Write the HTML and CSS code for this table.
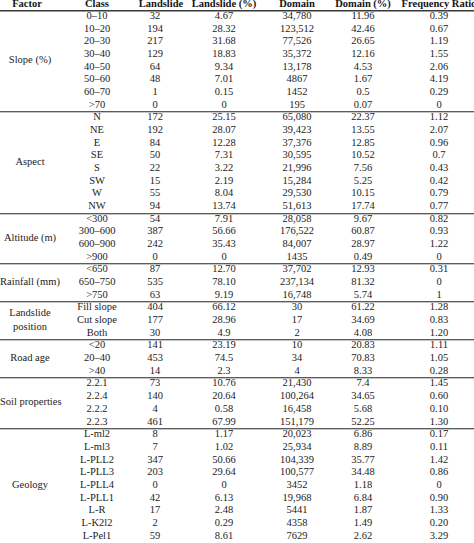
FILE: index.html
```html
<!DOCTYPE html>
<html>
<head>
<meta charset="utf-8">
<link rel="stylesheet" href="styles.css">
</head>
<body>
<table class="fr">
<colgroup>
<col class="c-factor"><col class="c-class"><col class="c-ls"><col class="c-lsp"><col class="c-dom"><col class="c-domp"><col class="c-fr">
</colgroup>
<thead>
<tr><th class="h-factor">Factor</th><th class="h-class">Class</th><th class="h-ls">Landslide</th><th>Landslide (%)</th><th>Domain</th><th>Domain (%)</th><th>Frequency Ratio</th></tr>
</thead>
<tbody class="grp first">
<tr><td class="factor" rowspan="8">Slope (%)</td><td class="cls">0–10</td><td class="ls">32</td><td>4.67</td><td>34,780</td><td>11.96</td><td>0.39</td></tr>
<tr><td class="cls">10–20</td><td class="ls">194</td><td>28.32</td><td>123,512</td><td>42.46</td><td>0.67</td></tr>
<tr><td class="cls">20–30</td><td class="ls">217</td><td>31.68</td><td>77,526</td><td>26.65</td><td>1.19</td></tr>
<tr><td class="cls">30–40</td><td class="ls">129</td><td>18.83</td><td>35,372</td><td>12.16</td><td>1.55</td></tr>
<tr><td class="cls">40–50</td><td class="ls">64</td><td>9.34</td><td>13,178</td><td>4.53</td><td>2.06</td></tr>
<tr><td class="cls">50–60</td><td class="ls">48</td><td>7.01</td><td>4867</td><td>1.67</td><td>4.19</td></tr>
<tr><td class="cls">60–70</td><td class="ls">1</td><td>0.15</td><td>1452</td><td>0.5</td><td>0.29</td></tr>
<tr><td class="cls">&gt;70</td><td class="ls">0</td><td>0</td><td>195</td><td>0.07</td><td>0</td></tr>
</tbody>
<tbody class="grp">
<tr><td class="factor" rowspan="8">Aspect</td><td class="cls">N</td><td class="ls">172</td><td>25.15</td><td>65,080</td><td>22.37</td><td>1.12</td></tr>
<tr><td class="cls">NE</td><td class="ls">192</td><td>28.07</td><td>39,423</td><td>13.55</td><td>2.07</td></tr>
<tr><td class="cls">E</td><td class="ls">84</td><td>12.28</td><td>37,376</td><td>12.85</td><td>0.96</td></tr>
<tr><td class="cls">SE</td><td class="ls">50</td><td>7.31</td><td>30,595</td><td>10.52</td><td>0.7</td></tr>
<tr><td class="cls">S</td><td class="ls">22</td><td>3.22</td><td>21,996</td><td>7.56</td><td>0.43</td></tr>
<tr><td class="cls">SW</td><td class="ls">15</td><td>2.19</td><td>15,284</td><td>5.25</td><td>0.42</td></tr>
<tr><td class="cls">W</td><td class="ls">55</td><td>8.04</td><td>29,530</td><td>10.15</td><td>0.79</td></tr>
<tr><td class="cls">NW</td><td class="ls">94</td><td>13.74</td><td>51,613</td><td>17.74</td><td>0.77</td></tr>
</tbody>
<tbody class="grp">
<tr><td class="factor" rowspan="4">Altitude (m)</td><td class="cls">&lt;300</td><td class="ls">54</td><td>7.91</td><td>28,058</td><td>9.67</td><td>0.82</td></tr>
<tr><td class="cls">300–600</td><td class="ls">387</td><td>56.66</td><td>176,522</td><td>60.87</td><td>0.93</td></tr>
<tr><td class="cls">600–900</td><td class="ls">242</td><td>35.43</td><td>84,007</td><td>28.97</td><td>1.22</td></tr>
<tr><td class="cls">&gt;900</td><td class="ls">0</td><td>0</td><td>1435</td><td>0.49</td><td>0</td></tr>
</tbody>
<tbody class="grp">
<tr><td class="factor" rowspan="3">Rainfall (mm)</td><td class="cls">&lt;650</td><td class="ls">87</td><td>12.70</td><td>37,702</td><td>12.93</td><td>0.31</td></tr>
<tr><td class="cls">650–750</td><td class="ls">535</td><td>78.10</td><td>237,134</td><td>81.32</td><td>0</td></tr>
<tr><td class="cls">&gt;750</td><td class="ls">63</td><td>9.19</td><td>16,748</td><td>5.74</td><td>1</td></tr>
</tbody>
<tbody class="grp">
<tr><td class="factor two" rowspan="3">Landslide<br>position</td><td class="cls">Fill slope</td><td class="ls">404</td><td>66.12</td><td>30</td><td>61.22</td><td>1.28</td></tr>
<tr><td class="cls">Cut slope</td><td class="ls">177</td><td>28.96</td><td>17</td><td>34.69</td><td>0.83</td></tr>
<tr><td class="cls">Both</td><td class="ls">30</td><td>4.9</td><td>2</td><td>4.08</td><td>1.20</td></tr>
</tbody>
<tbody class="grp">
<tr><td class="factor" rowspan="3">Road age</td><td class="cls">&lt;20</td><td class="ls">141</td><td>23.19</td><td>10</td><td>20.83</td><td>1.11</td></tr>
<tr><td class="cls">20–40</td><td class="ls">453</td><td>74.5</td><td>34</td><td>70.83</td><td>1.05</td></tr>
<tr><td class="cls">&gt;40</td><td class="ls">14</td><td>2.3</td><td>4</td><td>8.33</td><td>0.28</td></tr>
</tbody>
<tbody class="grp">
<tr><td class="factor" rowspan="4">Soil properties</td><td class="cls">2.2.1</td><td class="ls">73</td><td>10.76</td><td>21,430</td><td>7.4</td><td>1.45</td></tr>
<tr><td class="cls">2.2.4</td><td class="ls">140</td><td>20.64</td><td>100,264</td><td>34.65</td><td>0.60</td></tr>
<tr><td class="cls">2.2.2</td><td class="ls">4</td><td>0.58</td><td>16,458</td><td>5.68</td><td>0.10</td></tr>
<tr><td class="cls">2.2.3</td><td class="ls">461</td><td>67.99</td><td>151,179</td><td>52.25</td><td>1.30</td></tr>
</tbody>
<tbody class="grp">
<tr><td class="factor" rowspan="9">Geology</td><td class="cls">L-ml2</td><td class="ls">8</td><td>1.17</td><td>20,023</td><td>6.86</td><td>0.17</td></tr>
<tr><td class="cls">L-ml3</td><td class="ls">7</td><td>1.02</td><td>25,934</td><td>8.89</td><td>0.11</td></tr>
<tr><td class="cls">L-PLL2</td><td class="ls">347</td><td>50.66</td><td>104,339</td><td>35.77</td><td>1.42</td></tr>
<tr><td class="cls">L-PLL3</td><td class="ls">203</td><td>29.64</td><td>100,577</td><td>34.48</td><td>0.86</td></tr>
<tr><td class="cls">L-PLL4</td><td class="ls">0</td><td>0</td><td>3452</td><td>1.18</td><td>0</td></tr>
<tr><td class="cls">L-PLL1</td><td class="ls">42</td><td>6.13</td><td>19,968</td><td>6.84</td><td>0.90</td></tr>
<tr><td class="cls">L-R</td><td class="ls">17</td><td>2.48</td><td>5441</td><td>1.87</td><td>1.33</td></tr>
<tr><td class="cls">L-K2l2</td><td class="ls">2</td><td>0.29</td><td>4358</td><td>1.49</td><td>0.20</td></tr>
<tr><td class="cls">L-Pel1</td><td class="ls">59</td><td>8.61</td><td>7629</td><td>2.62</td><td>3.29</td></tr>
</tbody>
</table>
</body>
</html>
```
FILE: styles.css
```css
html, body {
  margin: 0;
  padding: 0;
  background: #ffffff;
  overflow: hidden;
}
body {
  width: 474px;
  height: 543px;
}
.fr {
  table-layout: fixed;
  width: 486px;
  border-collapse: separate;
  border-spacing: 0;
  font-family: "Liberation Serif", "Times New Roman", serif;
  font-size: 10.5px;
  color: #1c1c1c;
}
.c-factor { width: 62px; }
.c-class { width: 66px; }
.c-ls { width: 60px; }
.c-lsp { width: 72px; }
.c-dom { width: 74px; }
.c-domp { width: 58px; }
.c-fr { width: 94px; }

.fr th {
  font-weight: bold;
  line-height: 7px;
  height: 10px;
  padding: 0 0 3px 0;
  box-sizing: border-box;
  vertical-align: top;
  text-align: center;
  white-space: nowrap;
  color: #141414;
}
.fr th.h-factor { padding-right: 8px; }
.fr th.h-class { padding-left: 4px; }
.fr th.h-ls { padding-left: 6px; }

.fr td {
  padding: 0;
  line-height: 12.67px;
  height: 12.67px;
  text-align: center;
  white-space: nowrap;
  vertical-align: middle;
}
.fr td.cls { padding-left: 4px; }
.fr td.ls { padding-right: 6px; }
.fr td.factor { padding-right: 2px; }
.fr td.factor.two { line-height: 14px; }

.grp tr:first-child td {
  box-shadow: inset 0 1px 0 #5c5c5c, inset 0 2px 0 #c4c4c4;
}
.grp.first tr:first-child td {
  box-shadow: inset 0 1px 0 #3a3a3a, inset 0 2px 0 #9a9a9a;
}
```
